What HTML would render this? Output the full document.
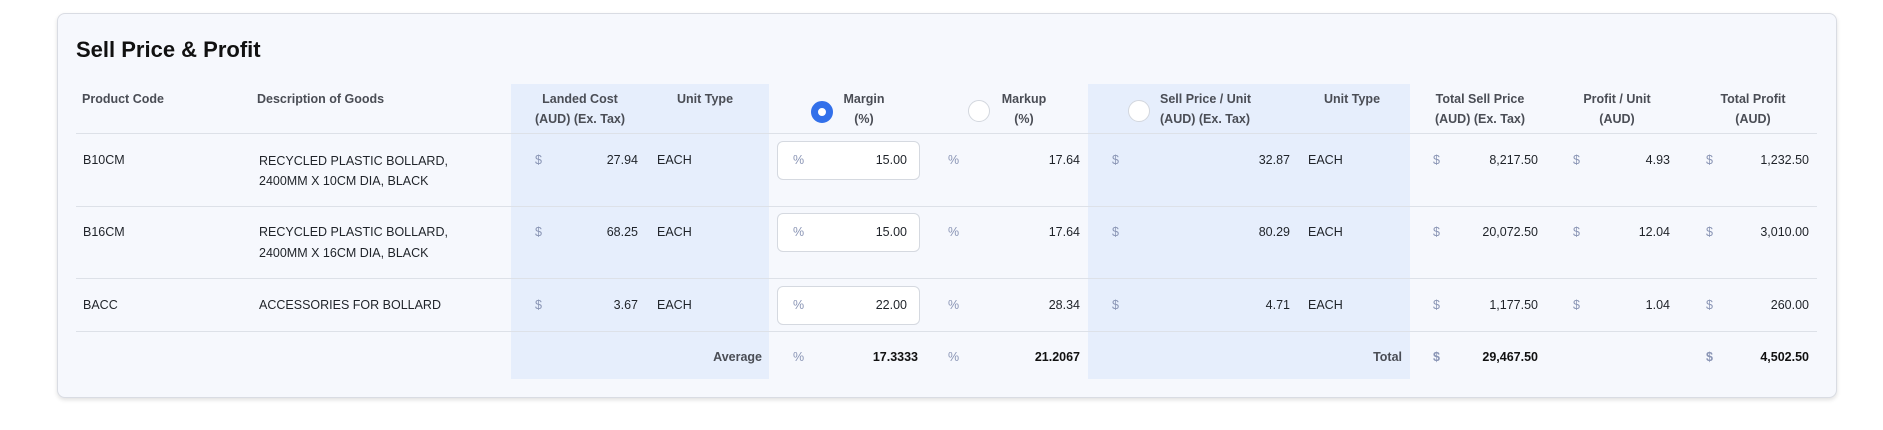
<!DOCTYPE html>
<html><head><meta charset="utf-8"><style>
*{margin:0;padding:0;box-sizing:border-box}
body{width:1883px;height:430px;background:#fff;font-family:"Liberation Sans",Arial,sans-serif;position:relative;overflow:hidden;color:#1f2329}
.card{position:absolute;left:57px;top:13px;width:1780px;height:385px;background:#f6f8fd;border:1px solid #d9dce3;border-radius:8px;box-shadow:0 2px 4px rgba(0,0,0,.12)}
.a{position:absolute;white-space:nowrap;font-size:12.5px;line-height:20px}
.h{font-weight:bold;color:#4a4d55}
.g{color:#8a95b5}
.b{font-weight:bold;color:#111}
.r{text-align:right}
.c{text-align:center}
.band{position:absolute;background:#e6eefc}
.line{position:absolute;left:76px;width:1741px;height:1px;background:#dde1e8}
.inp{position:absolute;left:777px;width:143px;height:39px;background:#fff;border:1px solid #d5d9e0;border-radius:6px}
.rad{position:absolute;border-radius:50%}
</style></head><body>
<div class="card"></div>
<div class="band" style="left:511px;top:84px;width:258px;height:295px"></div>
<div class="band" style="left:1088px;top:84px;width:322px;height:295px"></div>
<div class="a b" style="left:76px;top:37px;font-size:22px;line-height:26px">Sell Price &amp; Profit</div>

<div class="line" style="top:133px"></div>
<div class="line" style="top:206px"></div>
<div class="line" style="top:278px"></div>
<div class="line" style="top:331px"></div>

<!-- headers -->
<div class="a h" style="left:82px;top:89px">Product Code</div>
<div class="a h" style="left:257px;top:89px">Description of Goods</div>
<div class="a h c" style="left:520px;width:120px;top:89px">Landed Cost<br>(AUD) (Ex. Tax)</div>
<div class="a h" style="left:677px;top:89px">Unit Type</div>
<div class="rad" style="left:811px;top:101px;width:22px;height:22px;border:7px solid #3270ea;background:#fff"></div>
<div class="a h c" style="left:834px;width:60px;top:89px">Margin<br>(%)</div>
<div class="rad" style="left:968px;top:100px;width:22px;height:22px;border:1px solid #d3d7de;background:#fff"></div>
<div class="a h c" style="left:994px;width:60px;top:89px">Markup<br>(%)</div>
<div class="rad" style="left:1128px;top:100px;width:22px;height:22px;border:1px solid #d3d7de;background:#fff"></div>
<div class="a h" style="left:1160px;top:89px">Sell Price / Unit<br>(AUD) (Ex. Tax)</div>
<div class="a h" style="left:1324px;top:89px">Unit Type</div>
<div class="a h c" style="left:1420px;width:120px;top:89px">Total Sell Price<br>(AUD) (Ex. Tax)</div>
<div class="a h c" style="left:1567px;width:100px;top:89px">Profit / Unit<br>(AUD)</div>
<div class="a h c" style="left:1703px;width:100px;top:89px">Total Profit<br>(AUD)</div>

<!-- row 1 -->
<div class="a" style="left:83px;top:150px">B10CM</div>
<div class="a" style="left:259px;top:151px">RECYCLED PLASTIC BOLLARD,<br>2400MM X 10CM DIA, BLACK</div>
<div class="a g" style="left:535px;top:150px">$</div>
<div class="a r" style="left:560px;width:78px;top:150px">27.94</div>
<div class="a" style="left:657px;top:150px">EACH</div>
<div class="inp" style="top:141px"></div>
<div class="a g" style="left:793px;top:150px">%</div>
<div class="a r" style="left:830px;width:77px;top:150px">15.00</div>
<div class="a g" style="left:948px;top:150px">%</div>
<div class="a r" style="left:1000px;width:80px;top:150px">17.64</div>
<div class="a g" style="left:1112px;top:150px">$</div>
<div class="a r" style="left:1200px;width:90px;top:150px">32.87</div>
<div class="a" style="left:1308px;top:150px">EACH</div>
<div class="a g" style="left:1433px;top:150px">$</div>
<div class="a r" style="left:1447px;width:91px;top:150px">8,217.50</div>
<div class="a g" style="left:1573px;top:150px">$</div>
<div class="a r" style="left:1597px;width:73px;top:150px">4.93</div>
<div class="a g" style="left:1706px;top:150px">$</div>
<div class="a r" style="left:1716px;width:93px;top:150px">1,232.50</div>

<!-- row 2 -->
<div class="a" style="left:83px;top:222px">B16CM</div>
<div class="a" style="left:259px;top:222px;line-height:21px">RECYCLED PLASTIC BOLLARD,<br>2400MM X 16CM DIA, BLACK</div>
<div class="a g" style="left:535px;top:222px">$</div>
<div class="a r" style="left:560px;width:78px;top:222px">68.25</div>
<div class="a" style="left:657px;top:222px">EACH</div>
<div class="inp" style="top:213px"></div>
<div class="a g" style="left:793px;top:222px">%</div>
<div class="a r" style="left:830px;width:77px;top:222px">15.00</div>
<div class="a g" style="left:948px;top:222px">%</div>
<div class="a r" style="left:1000px;width:80px;top:222px">17.64</div>
<div class="a g" style="left:1112px;top:222px">$</div>
<div class="a r" style="left:1200px;width:90px;top:222px">80.29</div>
<div class="a" style="left:1308px;top:222px">EACH</div>
<div class="a g" style="left:1433px;top:222px">$</div>
<div class="a r" style="left:1447px;width:91px;top:222px">20,072.50</div>
<div class="a g" style="left:1573px;top:222px">$</div>
<div class="a r" style="left:1597px;width:73px;top:222px">12.04</div>
<div class="a g" style="left:1706px;top:222px">$</div>
<div class="a r" style="left:1716px;width:93px;top:222px">3,010.00</div>

<!-- row 3 -->
<div class="a" style="left:83px;top:295px">BACC</div>
<div class="a" style="left:259px;top:295px">ACCESSORIES FOR BOLLARD</div>
<div class="a g" style="left:535px;top:295px">$</div>
<div class="a r" style="left:560px;width:78px;top:295px">3.67</div>
<div class="a" style="left:657px;top:295px">EACH</div>
<div class="inp" style="top:286px"></div>
<div class="a g" style="left:793px;top:295px">%</div>
<div class="a r" style="left:830px;width:77px;top:295px">22.00</div>
<div class="a g" style="left:948px;top:295px">%</div>
<div class="a r" style="left:1000px;width:80px;top:295px">28.34</div>
<div class="a g" style="left:1112px;top:295px">$</div>
<div class="a r" style="left:1200px;width:90px;top:295px">4.71</div>
<div class="a" style="left:1308px;top:295px">EACH</div>
<div class="a g" style="left:1433px;top:295px">$</div>
<div class="a r" style="left:1447px;width:91px;top:295px">1,177.50</div>
<div class="a g" style="left:1573px;top:295px">$</div>
<div class="a r" style="left:1597px;width:73px;top:295px">1.04</div>
<div class="a g" style="left:1706px;top:295px">$</div>
<div class="a r" style="left:1716px;width:93px;top:295px">260.00</div>

<!-- footer -->
<div class="a h r" style="left:662px;width:100px;top:347px">Average</div>
<div class="a g" style="left:793px;top:347px">%</div>
<div class="a b r" style="left:830px;width:88px;top:347px">17.3333</div>
<div class="a g" style="left:948px;top:347px">%</div>
<div class="a b r" style="left:1000px;width:80px;top:347px">21.2067</div>
<div class="a h r" style="left:1302px;width:100px;top:347px">Total</div>
<div class="a g" style="left:1433px;top:347px;font-weight:bold">$</div>
<div class="a b r" style="left:1447px;width:91px;top:347px">29,467.50</div>
<div class="a g" style="left:1706px;top:347px;font-weight:bold">$</div>
<div class="a b r" style="left:1716px;width:93px;top:347px">4,502.50</div>
</body></html>
